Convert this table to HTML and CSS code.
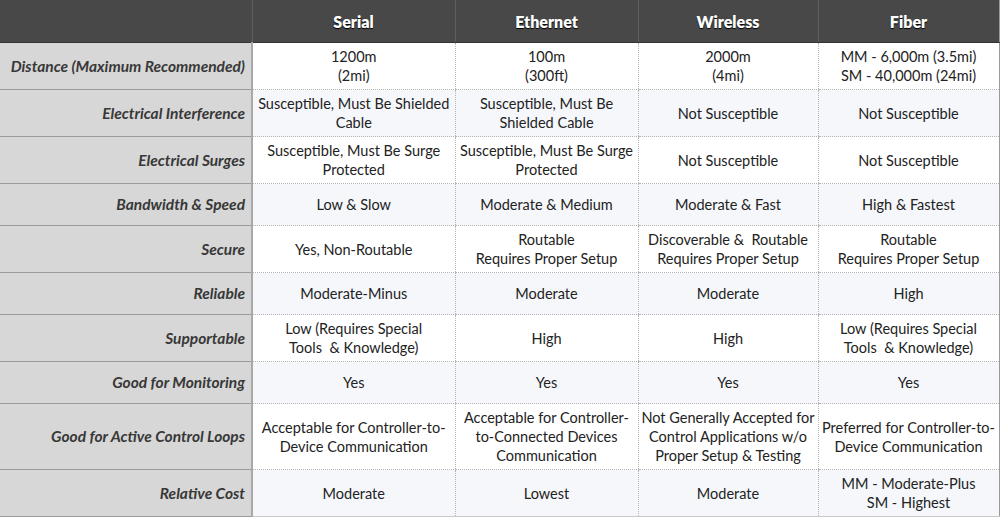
FILE: index.html
```html
<!DOCTYPE html>
<html>
<head>
<meta charset="utf-8">
<link rel="stylesheet" href="styles.css">
</head>
<body>
<table class="cmp">
  <colgroup>
    <col class="c-label"><col class="c-serial"><col class="c-eth"><col class="c-wifi"><col class="c-fiber">
  </colgroup>
  <thead>
    <tr class="head">
      <th class="corner"></th><th>Serial</th><th>Ethernet</th><th>Wireless</th><th>Fiber</th>
    </tr>
  </thead>
  <tbody>
    <tr>
      <th class="label">Distance (Maximum Recommended)</th>
      <td>1200m<br>(2mi)</td><td>100m<br>(300ft)</td><td>2000m<br>(4mi)</td><td>MM - 6,000m (3.5mi)<br>SM - 40,000m (24mi)</td>
    </tr>
    <tr class="alt">
      <th class="label">Electrical Interference</th>
      <td>Susceptible, Must Be Shielded<br>Cable</td><td>Susceptible, Must Be<br>Shielded Cable</td><td>Not Susceptible</td><td>Not Susceptible</td>
    </tr>
    <tr>
      <th class="label">Electrical Surges</th>
      <td>Susceptible, Must Be Surge<br>Protected</td><td>Susceptible, Must Be Surge<br>Protected</td><td>Not Susceptible</td><td>Not Susceptible</td>
    </tr>
    <tr class="alt">
      <th class="label">Bandwidth &amp; Speed</th>
      <td>Low &amp; Slow</td><td>Moderate &amp; Medium</td><td>Moderate &amp; Fast</td><td>High &amp; Fastest</td>
    </tr>
    <tr>
      <th class="label">Secure</th>
      <td>Yes, Non-Routable</td><td>Routable<br>Requires Proper Setup</td><td>Discoverable &amp;&nbsp; Routable<br>Requires Proper Setup</td><td>Routable<br>Requires Proper Setup</td>
    </tr>
    <tr class="alt">
      <th class="label">Reliable</th>
      <td>Moderate-Minus</td><td>Moderate</td><td>Moderate</td><td>High</td>
    </tr>
    <tr>
      <th class="label">Supportable</th>
      <td>Low (Requires Special<br>Tools &nbsp;&amp; Knowledge)</td><td>High</td><td>High</td><td>Low (Requires Special<br>Tools &nbsp;&amp; Knowledge)</td>
    </tr>
    <tr class="alt">
      <th class="label">Good for Monitoring</th>
      <td>Yes</td><td>Yes</td><td>Yes</td><td>Yes</td>
    </tr>
    <tr>
      <th class="label">Good for Active Control Loops</th>
      <td>Acceptable for Controller-to-<br>Device Communication</td><td>Acceptable for Controller-<br>to-Connected Devices<br>Communication</td><td>Not Generally Accepted for<br>Control Applications w/o<br>Proper Setup &amp; Testing</td><td>Preferred for Controller-to-<br>Device Communication</td>
    </tr>
    <tr class="alt">
      <th class="label">Relative Cost</th>
      <td>Moderate</td><td>Lowest</td><td>Moderate</td><td>MM - Moderate-Plus<br>SM - Highest</td>
    </tr>
  </tbody>
</table>
</body>
</html>
```
FILE: styles.css
```css
html, body {
  margin: 0;
  padding: 0;
  background: #ffffff;
}
.cmp {
  border-collapse: collapse;
  table-layout: fixed;
  width: 999px;
  font-family: Lato, "Liberation Sans", sans-serif;
  font-size: 14.5px;
  line-height: 19px;
  color: #222222;
  border-right: 1px solid #9a9a9a;
  border-bottom: 1px solid #c8c8c8;
}
.c-label { width: 252px; }
.c-serial { width: 203px; }
.c-eth { width: 183px; }
.c-wifi { width: 180px; }
.c-fiber { width: 181px; }

.head th {
  height: 42px;
  padding: 0;
  background: #484848;
  color: #ffffff;
  font-size: 16px;
  font-weight: 800;
  text-shadow: 0 1px 1px #000000;
  border-bottom: 1px solid #333333;
  border-left: 1px solid #5e5e5e;
  text-align: center;
  vertical-align: middle;
}
.head th.corner {
  border-left: none;
}
.label {
  background: #d7d7d7;
  color: #383838;
  font-size: 15.5px;
  font-style: italic;
  font-weight: 700;
  text-align: right;
  white-space: nowrap;
  padding: 0 6px 0 4px;
  border-bottom: 1px solid #9b9b9b;
  border-right: 2px solid #a8a8a8;
  vertical-align: middle;
}
td {
  height: 33px;
  padding: 4px 2px;
  text-align: center;
  vertical-align: middle;
  white-space: nowrap;
  border-left: 1px dotted #b5b5b5;
  border-bottom: 1px dotted #b5b5b5;
  background: #ffffff;
}
tr.alt td {
  background: #f5f7fb;
}
```
